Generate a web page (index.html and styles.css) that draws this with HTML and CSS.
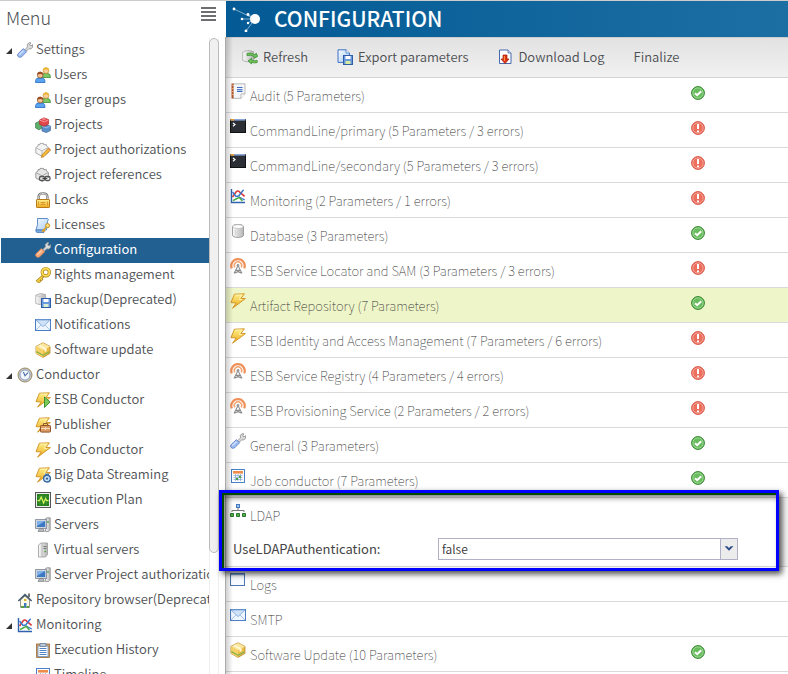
FILE: index.html
```html
<!DOCTYPE html>
<html lang="en">
<head>
	<meta charset="utf-8">
	<title>Configuration</title>
	<link rel="stylesheet" href="styles.css">
</head>
<body>
	<!-- icon sprite -->
	<svg class="sprite" aria-hidden="true">
		<defs>
			<linearGradient id="gold" x1="0" y1="0" x2="0" y2="1"><stop offset="0" stop-color="#fdf08a"/><stop offset="1" stop-color="#f0a81c"/></linearGradient>
			<linearGradient id="steel" x1="0" y1="0" x2="1" y2="0"><stop offset="0" stop-color="#fbfbfb"/><stop offset="1" stop-color="#b5b5b5"/></linearGradient>
			<linearGradient id="sky" x1="0" y1="0" x2="1" y2="1"><stop offset="0" stop-color="#f6faff"/><stop offset="1" stop-color="#a9cdf2"/></linearGradient>
		</defs>
		<symbol id="wrench" viewBox="0 0 16 16">
			<path d="M8 7.5 10.6 4.8 10.2 2.4 12.4.6 13.8.8 12.6 3 14 4 15.6 2.6 15.6 5.2 13.8 7 11.6 6.8 9.5 9z" fill="#dcdcdc" stroke="#8a8a8a" stroke-width=".8"/>
			<path d="M.8 12 6.4 6.6 9.6 9.8 4.4 15 Q2.4 15.8 1.2 14.6 .2 13.4 .8 12z" fill="#9dbcf0" stroke="#5577c4" stroke-width=".8"/>
			<path d="M2.2 12.6 6.6 8.6" stroke="#d7e5ff" stroke-width="1.2"/>
		</symbol>
		<symbol id="wrench-orange" viewBox="0 0 16 16">
			<path d="M8 7.5 10.6 4.8 10.2 2.4 12.4.6 13.8.8 12.6 3 14 4 15.6 2.6 15.6 5.2 13.8 7 11.6 6.8 9.5 9z" fill="#dcdcdc" stroke="#999" stroke-width=".8"/>
			<path d="M.8 12 6.4 6.6 9.6 9.8 4.4 15 Q2.4 15.8 1.2 14.6 .2 13.4 .8 12z" fill="#f6a878" stroke="#e08a58" stroke-width=".8"/>
			<path d="M2.2 12.6 6.6 8.6" stroke="#fdd3b6" stroke-width="1.2"/>
		</symbol>
		<symbol id="users" viewBox="0 0 16 16">
			<path d="M6.5 10.5Q6.5 6.6 9 6.5H13Q15.5 6.8 15.5 10.5z" fill="#7cc665" stroke="#3f8f35" stroke-width=".8"/>
			<circle cx="11" cy="3.6" r="2.9" fill="#f8cf98" stroke="#c68a2e" stroke-width=".7"/>
			<path d="M8 3.2Q8.4.4 11 .4T14 3.2Q11 1.8 8 3.2z" fill="#edb62e"/>
			<path d="M.5 15.5Q.5 11.2 3 11H7.4Q10 11.2 10 15.5z" fill="#58a4f0" stroke="#2468bd" stroke-width=".8"/>
			<circle cx="5.2" cy="8" r="2.9" fill="#f2c294" stroke="#8f4a20" stroke-width=".7"/>
			<path d="M2.2 7.8Q2.4 4.8 5.2 4.8T8.2 7.8Q5.4 6 2.2 7.8z" fill="#9c4a20"/>
		</symbol>
		<symbol id="cubes" viewBox="0 0 16 16">
			<path d="M.6 6 4 4.4 7 6V11L4 12.8.6 11z" fill="#5fae6b" stroke="#39784a" stroke-width=".7"/>
			<path d="M7 9.4 11 7.6 15.4 9V13.6L11.4 15.6 7 14z" fill="#5b8fca" stroke="#38649b" stroke-width=".7"/>
			<path d="M7 9.4 11.3 10.8 15.4 9" stroke="#a3c6ee" fill="none" stroke-width=".8"/>
			<path d="M4.6 3 9 .8 13.6 2.6V7L9.4 9.2 4.6 7.4z" fill="#e2474c" stroke="#b42b35" stroke-width=".7"/>
			<path d="M4.9 3.2 9.3 4.8 13.4 2.8" stroke="#fb9a99" fill="none"/>
			<ellipse cx="9" cy="2" rx="2" ry="1" fill="#f78484"/>
		</symbol>
		<symbol id="cube-pencil" viewBox="0 0 16 16">
			<path d="M.8 5.6 3 4V2.6H5V1.4H8.6V2.6H11.4V4L13.4 5.4V10.6L7.2 14.4.8 11z" fill="#f3f3f3" stroke="#999" stroke-width=".8"/>
			<path d="M1 5.8 7 8.8 13.2 5.6M7 8.8V14" stroke="#bbb" fill="none"/>
			<path d="M13.6 6 15.6 8 9 14.6 6.4 15.4 7.2 12.6z" fill="#f6bb3a" stroke="#b9781a" stroke-width=".8"/>
			<path d="M12.8 6.8 14.8 8.8 15.6 8 13.6 6z" fill="#e88463"/>
		</symbol>
		<symbol id="cube-link" viewBox="0 0 16 16">
			<path d="M.8 5.6 3 4V2.6H5V1.4H8.6V2.6H11.4V4L13.4 5.4V10.6L7.2 14.4.8 11z" fill="#e6e6e6" stroke="#888" stroke-width=".8"/>
			<path d="M1 5.8 7 8.8 13.2 5.6" stroke="#aaa" fill="none"/>
			<rect x="4.5" y="9.5" width="5" height="4" rx="1.5" fill="none" stroke="#555" stroke-width="1.3"/>
			<rect x="10" y="9.5" width="5" height="4" rx="1.5" fill="none" stroke="#555" stroke-width="1.3"/>
			<path d="M7.5 11.5H12" stroke="#444"/>
		</symbol>
		<symbol id="lock" viewBox="0 0 16 16">
			<path d="M3.6 8V4.6Q3.8 1.4 8 1.4T12.4 4.6V8" fill="none" stroke="#777" stroke-width="2.4"/>
			<path d="M3.6 8V4.6Q3.8 1.4 8 1.4T12.4 4.6V8" fill="none" stroke="#ddd" stroke-width=".9"/>
			<rect x="1.5" y="7.5" width="13" height="8" rx=".6" fill="url(#gold)" stroke="#b77a17"/>
			<path d="M3.5 9.5V13.5M5.5 10.5H10.5M5.5 12.5H10.5M12.5 9.5V13.5M8 10V13" stroke="#d99a30"/>
		</symbol>
		<symbol id="licence" viewBox="0 0 16 16">
			<path d="M2.5 1.5H12.5Q14 2 12.5 4.5L11.5 13H1Q3.4 8 2.5 1.5z" fill="url(#sky)" stroke="#5c8dc6"/>
			<path d="M.8 13H9V15.4H2Q.6 15 .8 13z" fill="#7fb2e8" stroke="#3d72b4" stroke-width=".8"/>
			<circle cx="12.6" cy="8.6" r="2" fill="#ffe27a" stroke="#c38a1b"/>
			<path d="M11.4 10 7 14.6M8.6 13 10 14.6" stroke="#dca02a" stroke-width="1.6"/>
		</symbol>
		<symbol id="key" viewBox="0 0 16 16">
			<path d="M8.6 8.6 1.6 14.8M3.4 13.2 5.2 15.4M5.6 11.4 7.4 13.4" stroke="#a97c12" stroke-width="2.8"/>
			<path d="M8.6 8.6 1.6 14.8M3.4 13.2 5 15M5.6 11.4 7 13" stroke="#f8d648" stroke-width="1.3"/>
			<circle cx="10.8" cy="5.2" r="3.6" fill="none" stroke="#a97c12" stroke-width="3.200"/>
			<circle cx="10.8" cy="5.2" r="3.6" fill="none" stroke="#fbdc56" stroke-width="2"/>
		</symbol>
		<symbol id="backup" viewBox="0 0 16 16">
			<path d="M.7 3.2Q5 .2 10.6 2.6V11.6Q5 14 .7 11.4z" fill="url(#steel)" stroke="#aaa" stroke-width=".8"/>
			<path d="M.8 3.6Q5.4 6 10.6 3.2" stroke="#bbb" fill="none" stroke-width=".8"/>
			<rect x="6.5" y="6.5" width="9" height="9" fill="#6a98dc" stroke="#2f5da8"/>
			<path d="M8.5 7H13.5V10H8.5z" fill="#fff"/><path d="M8.5 12H13.5V15H8.5z" fill="#d7efd0"/>
		</symbol>
		<symbol id="mail" viewBox="0 0 16 16">
			<rect x=".5" y="2.5" width="15" height="11" fill="#eef5fe" stroke="#4c7fc4"/>
			<path d="M1 3 8 9.6 15 3z" fill="#cfe2f8" stroke="#82a9dc" stroke-width=".9"/>
			<path d="M1 13 6 8M15 13 10 8" stroke="#9dbde6" stroke-width=".9"/>
		</symbol>
		<symbol id="box" viewBox="0 0 16 16">
			<path d="M8 .8 15 4.4V11.4L8 15.4 1 11.4V4.4z" fill="#edbd48" stroke="#b9862a" stroke-width=".8"/>
			<path d="M8 1 15 4.6 8 8.6 1 4.6z" fill="#fbe69d"/>
			<path d="M8 8.6V15.2L1 11.4V4.6z" fill="#f8d268"/>
			<path d="M5 2.8 11.6 6.6V9L9.6 10.2V7.6L3.6 4z" fill="#fff6d4"/>
			<path d="M1.4 9.6 8 13.2 14.6 9.6" fill="none" stroke="#8ab44a" stroke-width="1.3"/>
		</symbol>
		<symbol id="clock" viewBox="0 0 16 16">
			<circle cx="8" cy="8" r="7" fill="#c3c6cc" stroke="#98804f" stroke-width=".9"/>
			<circle cx="8" cy="8" r="5" fill="#f3f8ff" stroke="#8398b6" stroke-width=".9"/>
			<path d="M6.400 5 8 8.8 11 5.6" fill="none" stroke="#4a6da8" stroke-width="1.1"/>
		</symbol>
		<symbol id="bolt" viewBox="0 0 16 16">
			<path d="M4.400 1.2 14.4.8 11 5.4 15.4 5.6 2.6 15.2 6.2 10 1 9.600z" fill="url(#gold)" stroke="#cf9020" stroke-width=".9"/>
			<path d="M5.200 2.2 12 2 9 6.200 12 6.6" fill="none" stroke="#fff8bd" stroke-width=".8"/>
		</symbol>
		<symbol id="bolt-play" viewBox="0 0 16 16">
			<use href="#bolt"/><path d="M9.5 5 15 10 9.5 15.4z" fill="#7cca58" stroke="#3d9130"/>
		</symbol>
		<symbol id="bolt-case" viewBox="0 0 16 16">
			<use href="#bolt"/>
			<path d="M8.5 8.5V6.5H12.5V8.5" fill="none" stroke="#8a5a30"/>
			<rect x="5.5" y="8.5" width="10" height="6.6" rx=".8" fill="#dc9a64" stroke="#8e5327"/>
			<path d="M6 11.5H15M10.5 10V13" stroke="#f6dcb8"/>
		</symbol>
		<symbol id="bolt-gear" viewBox="0 0 16 16">
			<use href="#bolt"/>
			<path d="M10 6.5H14V8H10z" fill="#5d88b9"/>
			<circle cx="12" cy="11.6" r="3.4" fill="#cfe3f7" stroke="#36679f" stroke-width="1.4"/>
			<circle cx="12" cy="11.6" r="1.2" fill="#36679f"/>
		</symbol>
		<symbol id="plan" viewBox="0 0 16 16">
			<rect x=".5" y=".5" width="15" height="15" fill="#eee" stroke="#555"/>
			<rect x="2" y="2" width="12" height="12" fill="#257c1c"/>
			<path d="M5 2V14M8 2V14M11 2V14M2 5H14M2 8H14M2 11H14" stroke="#4ba33c" stroke-width=".6"/>
			<path d="M2.5 8.6H4.5L6.2 5 8.6 11 10.6 6.5 11.6 8.6H13.6" fill="none" stroke="#d8f55f" stroke-width="1.2"/>
		</symbol>
		<symbol id="pc" viewBox="0 0 16 16">
			<path d="M10.5 1.5 12 .8H15.2V13L13.6 14.6H10.5z" fill="url(#steel)" stroke="#888" stroke-width=".8"/>
			<path d="M13 4V6" stroke="#4a9a36" stroke-width="1.2"/>
			<rect x=".6" y="2.6" width="11" height="8.8" fill="#d5dae0" stroke="#818b98" stroke-width=".9"/>
			<rect x="2" y="4" width="8.2" height="6" fill="#3c78c3"/>
			<path d="M2 4H10L2 9z" fill="#7fb0e8"/>
			<path d="M4.6 11.6H8L9.4 14.4H3z" fill="#b7bcc2" stroke="#777" stroke-width=".7"/>
		</symbol>
		<symbol id="server" viewBox="0 0 16 16">
			<path d="M3.5 3 6 1H12.5V12.6L10.4 15H3.5z" fill="url(#steel)" stroke="#999" stroke-width=".8"/>
			<path d="M7 1.4V14.6" stroke="#aaa" stroke-width=".7"/>
			<path d="M8.5 4.5H11.5M8.5 6.5H11.5" stroke="#777"/><path d="M9.4 9.5H11" stroke="#56a63c" stroke-width="1.6"/>
		</symbol>
		<symbol id="home" viewBox="0 0 16 16">
			<path d="M3.5 8V15.5H12.5V8L8 4z" fill="#fffbe6" stroke="#999"/>
			<path d="M1.4 9 8 2.6 14.6 9" fill="none" stroke="#445b6b" stroke-width="1.6"/>
			<path d="M12 1.4V5" stroke="#666" stroke-width="1.8"/>
			<path d="M7 11H9.4V15.5H7z" fill="#3f7dba"/><path d="M7 7H9.4V9H7z" fill="#d3b52d"/>
			<path d="M4 15H7M9.6 15H12" stroke="#58a03c" stroke-width="1.8"/>
		</symbol>
		<symbol id="chart" viewBox="0 0 16 16">
			<path d="M1.5 1V14.5H15" fill="none" stroke="#2f62ad" stroke-width="1.4"/>
			<path d="M2.6 9 6 4Q8 1.8 10 4.4L14.6 8.4" fill="none" stroke="#d93838" stroke-width="1.6"/>
			<path d="M2.6 4 6 8.4 8.6 8 13.6 1.8M9 9 14.8 12" fill="none" stroke="#3577d1" stroke-width="1.4"/>
			<path d="M3 12.6 6 11 9.4 9.4 12.4 13" fill="none" stroke="#4fae48" stroke-width="1.6"/>
		</symbol>
		<symbol id="clipboard" viewBox="0 0 16 16">
			<rect x="1.6" y="2" width="12.8" height="13.4" fill="#d79f62" stroke="#996833" stroke-width=".8"/>
			<rect x="3" y="4" width="10" height="10.6" fill="#fff" stroke="#6992c6" stroke-width=".8"/>
			<path d="M4.5 6.5H11.5M4.5 8.5H11.5M4.5 10.5H11.5M4.5 12.5H11.5" stroke="#4f83c8"/>
			<path d="M5 1.5H11V4.5H5z" fill="#b8c8dd" stroke="#6b7e97" stroke-width=".8"/>
		</symbol>
		<symbol id="calendar" viewBox="0 0 16 16">
			<rect x="1.5" y="1.5" width="13" height="13" fill="#fff" stroke="#4a80c4"/>
			<path d="M3 3H13V5.6H3z" fill="#f08c4a"/>
			<path d="M3.5 7.5H12.5M3.5 9.5H12.5M3.5 11.5H12.5M5.5 6V13M8 6V13M10.5 6V13" stroke="#8aabd0" stroke-width=".8"/>
			<path d="M9 8H11V10H9zM6 10H8V12H6z" fill="#4fa34a"/>
		</symbol>
		<symbol id="refresh" viewBox="0 0 16 16">
			<path d="M.7 3.2Q5 .2 11.6 2.6V11.6Q5 14 .7 11.4z" fill="url(#steel)" stroke="#aaa" stroke-width=".8"/>
			<path d="M5 4.400Q10 3.200 12 5.400H14V4L15.8 7.400 12 9.400V7.400Q9 5.800 5 6.600z" fill="#6fc257" stroke="#34862c" stroke-width=".7"/>
			<path d="M15.200 13.600Q12 14.600 9.6 13V15L6 12 9.6 9.2V10.800Q12 12.2 15.200 11.400z" fill="#6fc257" stroke="#34862c" stroke-width=".7"/>
		</symbol>
		<symbol id="export" viewBox="0 0 16 16">
			<path d="M1 .8H9L12.4 4V13.4H1z" fill="url(#sky)" stroke="#3f73c4"/>
			<path d="M9 .8V4H12.4" fill="#fff" stroke="#3f73c4" stroke-width=".8"/>
			<rect x="6.5" y="6.5" width="9" height="9" fill="#6a98dc" stroke="#2f5da8"/>
			<path d="M8.5 7H13.5V10H8.5z" fill="#fff"/><path d="M8.5 12H13.5V15H8.5z" fill="#d8ec9d"/>
		</symbol>
		<symbol id="download" viewBox="0 0 16 16">
			<path d="M2.5 1H11L14 4V14.5H2.5z" fill="#fff" stroke="#4b67ae"/>
			<path d="M11 1V4H14" fill="#dce4f6" stroke="#4b67ae" stroke-width=".8"/>
			<path d="M6 6H10V10H12L8 14.6 4 10H6z" fill="#dd3312" stroke="#a11a0a" stroke-width=".7"/>
			<path d="M7.4 7V12" stroke="#ffa04a"/>
		</symbol>
		<symbol id="notebook" viewBox="0 0 16 16">
			<path d="M3 .8H15V11L11 15.4H3z" fill="#f4f5f8" stroke="#aaa" stroke-width=".8"/>
			<path d="M15 11H11V15.4" fill="#fff" stroke="#aaa" stroke-width=".8"/>
			<path d="M2.500 .5V15.5" stroke="#b3562b" stroke-width="2"/>
			<path d="M1.500 2.5H4M1.500 5.5H4M1.500 8.5H4M1.500 11.5H4" stroke="#eab58f" stroke-width=".8"/>
			<path d="M7 4.5H12.5M7 8.5H12.5" stroke="#3e6dc0"/><path d="M7 6H12.5V7.4H7z" fill="#5482d0"/>
		</symbol>
		<symbol id="terminal" viewBox="0 0 16 16">
			<rect x=".5" y="1.5" width="15" height="13" fill="#2b2f35" stroke="#111"/>
			<path d="M.5 1.8H15.5" stroke="#8aa7d8" stroke-width="1.6"/><path d="M.5 1.8H4" stroke="#f0a42f" stroke-width="1.6"/>
			<path d="M3 5 5 6.600 3 8.2" fill="none" stroke="#fff" stroke-width="1.2"/>
		</symbol>
		<symbol id="db" viewBox="0 0 16 16">
			<path d="M2.5 3.4Q2.6 1.4 8 1.4T13.5 3.4V12.2Q13.2 14.4 8 14.4T2.5 12.2z" fill="url(#steel)" stroke="#999" stroke-width=".9"/>
			<ellipse cx="8" cy="3.6" rx="5" ry="1.9" fill="#fff" stroke="#bbb" stroke-width=".7"/>
			<path d="M5.5 7V12M8 7.4V12.4M10.5 7V12" stroke="#ccc" stroke-width=".7"/>
		</symbol>
		<symbol id="antenna" viewBox="0 0 16 16">
			<path d="M1.800 10.400A6.700 6.700 0 1 1 14.200 10.400" fill="none" stroke="#f09058" stroke-width="2.2"/>
			<path d="M4.8 9.4A3.700 3.700 0 1 1 11.2 9.4" fill="none" stroke="#f5a36f" stroke-width="1.5"/>
			<path d="M4 15.4 8 7.6 12 15.4M5.6 12.4H10.4M6 12.4 11 15M10.4 12.4 5 15" fill="none" stroke="#8b8b8b" stroke-width="1.1"/>
			<circle cx="8" cy="7.4" r="1.4" fill="#999"/>
		</symbol>
		<symbol id="ldap" viewBox="0 0 16 16">
			<path d="M8 5V8M2 9V7.5H14V9" fill="none" stroke="#777"/>
			<rect x="6.5" y="1.5" width="3" height="3" fill="#9ec1f2" stroke="#4477bd"/>
			<path d="M.5 10.5H3.5V13.5H.5zM6.5 10.5H9.5V13.5H6.5zM12.5 10.5H15.5V13.5H12.5z" fill="#59b150" stroke="#26752a"/>
		</symbol>
		<symbol id="window" viewBox="0 0 16 16">
			<rect x=".5" y="1.5" width="14" height="12" fill="#f8fbff" stroke="#4b77b4"/><path d="M1 2.5H14" stroke="#7fa5dc" stroke-width="1.4"/>
		</symbol>
		<symbol id="ok" viewBox="0 0 14 14">
			<circle cx="7" cy="7" r="6.4" fill="#4fae45" stroke="#34862e"/><circle cx="7" cy="7" r="5.2" fill="#67bc5b" stroke="#c4e6bd" stroke-width=".7"/>
			<path d="M4 7.2 6.2 9.2 10.2 5.2" fill="none" stroke="#fff" stroke-width="2"/>
		</symbol>
		<symbol id="error" viewBox="0 0 14 14">
			<circle cx="7" cy="7" r="6.4" fill="#e65a48" stroke="#d85a4c"/><circle cx="7" cy="7" r="5.2" fill="#ec6e5c" stroke="#f9c6bd" stroke-width=".7"/>
			<path d="M7 3V8M7 9.4V11.2" stroke="#fff" stroke-width="2"/>
		</symbol>
	</svg>

	<div class="page">
		<aside class="sidebar">
			<header class="menu-head">
				<h2>Menu</h2>
				<button class="burger" type="button" aria-label="Toggle menu"><i></i><i></i><i></i><i></i></button>
			</header>
			<div class="menu-body">
				<nav class="tree">
					<a class="node" href="#"><i class="arrow"></i><svg><use href="#wrench"/></svg>Settings</a>
					<a class="leaf" href="#"><svg><use href="#users"/></svg>Users</a>
					<a class="leaf" href="#"><svg><use href="#users"/></svg>User groups</a>
					<a class="leaf" href="#"><svg><use href="#cubes"/></svg>Projects</a>
					<a class="leaf" href="#"><svg><use href="#cube-pencil"/></svg>Project authorizations</a>
					<a class="leaf" href="#"><svg><use href="#cube-link"/></svg>Project references</a>
					<a class="leaf" href="#"><svg><use href="#lock"/></svg>Locks</a>
					<a class="leaf" href="#"><svg><use href="#licence"/></svg>Licenses</a>
					<a class="leaf selected" href="#"><svg><use href="#wrench-orange"/></svg>Configuration</a>
					<a class="leaf" href="#"><svg><use href="#key"/></svg>Rights management</a>
					<a class="leaf" href="#"><svg><use href="#backup"/></svg>Backup(Deprecated)</a>
					<a class="leaf" href="#"><svg><use href="#mail"/></svg>Notifications</a>
					<a class="leaf" href="#"><svg><use href="#box"/></svg>Software update</a>
					<a class="node" href="#"><i class="arrow"></i><svg><use href="#clock"/></svg>Conductor</a>
					<a class="leaf" href="#"><svg><use href="#bolt-play"/></svg>ESB Conductor</a>
					<a class="leaf" href="#"><svg><use href="#bolt-case"/></svg>Publisher</a>
					<a class="leaf" href="#"><svg><use href="#bolt"/></svg>Job Conductor</a>
					<a class="leaf" href="#"><svg><use href="#bolt-gear"/></svg>Big Data Streaming</a>
					<a class="leaf" href="#"><svg><use href="#plan"/></svg>Execution Plan</a>
					<a class="leaf" href="#"><svg><use href="#pc"/></svg>Servers</a>
					<a class="leaf" href="#"><svg><use href="#server"/></svg>Virtual servers</a>
					<a class="leaf" href="#"><svg><use href="#pc"/></svg>Server Project authorizations</a>
					<a class="node childless" href="#"><svg><use href="#home"/></svg>Repository browser(Deprecated)</a>
					<a class="node" href="#"><i class="arrow"></i><svg><use href="#chart"/></svg>Monitoring</a>
					<a class="leaf" href="#"><svg><use href="#clipboard"/></svg>Execution History</a>
					<a class="leaf" href="#"><svg><use href="#calendar"/></svg>Timeline</a>
				</nav>
				<div class="scrollbar"><div class="thumb"></div></div>
			</div>
		</aside>

		<main class="content">
			<header class="title-bar">
				<svg class="logo" viewBox="0 0 30 26">
					<path d="M2 3 23 13M10 13H23M14 25 23 13M16 8.5 23 13M16 17 23 13" stroke="#9fc3dc" stroke-width=".8"/>
					<circle cx="23" cy="13" r="5" fill="#fff"/>
					<g fill="#fff"><circle cx="2" cy="3" r="1.4"/><circle cx="10" cy="13" r="1.3"/><circle cx="14" cy="25" r="1.4"/><circle cx="16" cy="8.5" r="1.4"/><circle cx="16" cy="17" r="1.2"/></g>
				</svg>
				<h1>CONFIGURATION</h1>
			</header>
			<div class="panel">
				<div class="toolbar">
					<button type="button"><svg><use href="#refresh"/></svg>Refresh</button>
					<button type="button"><svg><use href="#export"/></svg>Export parameters</button>
					<button type="button"><svg><use href="#download"/></svg>Download Log</button>
					<button type="button">Finalize</button>
				</div>
				<table class="groups">
					<tbody>
						<tr><td class="name"><svg><use href="#notebook"/></svg><span>Audit (5 Parameters)</span></td><td><svg class="status"><use href="#ok"/></svg></td></tr>
						<tr><td class="name"><svg><use href="#terminal"/></svg><span>CommandLine/primary (5 Parameters / 3 errors)</span></td><td><svg class="status"><use href="#error"/></svg></td></tr>
						<tr><td class="name"><svg><use href="#terminal"/></svg><span>CommandLine/secondary (5 Parameters / 3 errors)</span></td><td><svg class="status"><use href="#error"/></svg></td></tr>
						<tr><td class="name"><svg><use href="#chart"/></svg><span>Monitoring (2 Parameters / 1 errors)</span></td><td><svg class="status"><use href="#error"/></svg></td></tr>
						<tr><td class="name"><svg><use href="#db"/></svg><span>Database (3 Parameters)</span></td><td><svg class="status"><use href="#ok"/></svg></td></tr>
						<tr><td class="name"><svg><use href="#antenna"/></svg><span>ESB Service Locator and SAM (3 Parameters / 3 errors)</span></td><td><svg class="status"><use href="#error"/></svg></td></tr>
						<tr class="hover"><td class="name"><svg><use href="#bolt"/></svg><span>Artifact Repository (7 Parameters)</span></td><td><svg class="status"><use href="#ok"/></svg></td></tr>
						<tr><td class="name"><svg><use href="#bolt"/></svg><span>ESB Identity and Access Management (7 Parameters / 6 errors)</span></td><td><svg class="status"><use href="#error"/></svg></td></tr>
						<tr><td class="name"><svg><use href="#antenna"/></svg><span>ESB Service Registry (4 Parameters / 4 errors)</span></td><td><svg class="status"><use href="#error"/></svg></td></tr>
						<tr><td class="name"><svg><use href="#antenna"/></svg><span>ESB Provisioning Service (2 Parameters / 2 errors)</span></td><td><svg class="status"><use href="#error"/></svg></td></tr>
						<tr><td class="name"><svg><use href="#wrench"/></svg><span>General (3 Parameters)</span></td><td><svg class="status"><use href="#ok"/></svg></td></tr>
						<tr><td class="name"><svg><use href="#calendar"/></svg><span>Job conductor (7 Parameters)</span></td><td><svg class="status"><use href="#ok"/></svg></td></tr>
						<tr>
							<td class="open" colspan="2">
								<div class="name"><svg><use href="#ldap"/></svg><span>LDAP</span></div>
								<div class="field">
									<label for="use-ldap">UseLDAPAuthentication:</label>
									<div class="select">
										<select id="use-ldap"><option>false</option><option>true</option></select>
										<svg viewBox="0 0 18 20"><path d="M4 7H7L9 9 11 7H14L9 12z"/></svg>
									</div>
								</div>
								<div class="callout"></div>
							</td>
						</tr>
						<tr><td class="name"><svg><use href="#window"/></svg><span>Logs</span></td><td></td></tr>
						<tr><td class="name"><svg><use href="#mail"/></svg><span>SMTP</span></td><td></td></tr>
						<tr><td class="name"><svg><use href="#box"/></svg><span>Software Update (10 Parameters)</span></td><td><svg class="status"><use href="#ok"/></svg></td></tr>
					</tbody>
				</table>
			</div>
		</main>
	</div>
</body>
</html>
```

FILE: styles.css
```css
* {
	box-sizing: border-box;
}

body {
	margin: 0;
	background: #fff;
	color: #4d4f53;
	font: 350 13px/20px "Noto Sans CJK SC", "Noto Sans", sans-serif;
}

h1, h2 {
	margin: 0;
	font-weight: 400;
}

a {
	color: inherit;
	text-decoration: none;
}

svg {
	flex: none;
	width: 16px;
	height: 16px;
}

.sprite {
	position: absolute;
	width: 0;
	height: 0;
}

.page {
	display: flex;
	height: 100vh;
	border-top: 1px solid #ccc;
	overflow: hidden;
}

/* left menu */
.sidebar {
	display: flex;
	flex-direction: column;
	flex: 0 0 219px;
	min-width: 0;
	margin-right: 7px;
}

.menu-head {
	display: flex;
	justify-content: space-between;
	align-items: flex-start;
	height: 37px;
	padding: 5px 3px 0 6px;
}

.menu-head h2 {
	font-size: 18px;
	font-weight: 300;
	line-height: 23px;
}

.burger {
	display: flex;
	flex-direction: column;
	gap: 2px;
	padding: 1px 0;
	border: 0;
	background: none;
}

.burger i {
	width: 15px;
	height: 2px;
	background: #6e6e70;
}

.menu-body {
	display: flex;
	flex: 1;
	min-height: 0;
}

.tree {
	flex: 1;
	min-width: 0;
	overflow: hidden;
	padding-left: 1px;
}

.node,
.leaf {
	display: flex;
	gap: 3px;
	height: 25px;
	line-height: 22px;
	white-space: nowrap;
}

.node svg,
.leaf svg {
	margin-top: 4px;
}

.node {
	padding-left: 5px;
}

.childless {
	padding-left: 16px;
}

.leaf {
	padding-left: 34px;
}

.selected {
	background: #226092;
	color: #fff;
	font-weight: 400;
}

.arrow {
	width: 6px;
	height: 6px;
	margin: 10px 2px 0 0;
	background: #333;
	clip-path: polygon(100% 0, 100% 100%, 0 100%);
}

.scrollbar {
	width: 10px;
	border: solid #eee;
	border-width: 0 1px;
}

.thumb {
	height: 81%;
	margin: 0 -1px;
	border: 1px solid #bbb;
	border-radius: 5px;
	background: #f0f0f0;
}

/* right part */
.content {
	display: flex;
	flex-direction: column;
	flex: 1;
	min-width: 0;
}

.title-bar {
	display: flex;
	flex: none;
	align-items: center;
	gap: 12px;
	height: 36px;
	padding-left: 6px;
	background: linear-gradient(90deg, #035a95, #1c6fa3);
	color: #fff;
}

.title-bar h1 {
	padding-bottom: 2px;
	font-size: 21px;
	font-weight: 500;
	line-height: 30px;
}

.logo {
	width: 30px;
	height: 26px;
}

.panel {
	position: relative;
	flex: 1;
	min-height: 0;
	border-left: 1px solid #aaa;
	margin-left: -1px;
}

/* shade along the left edge */
.panel::before {
	content: "";
	position: absolute;
	z-index: 1;
	top: 0;
	bottom: 0;
	left: 0;
	width: 7px;
	background: linear-gradient(90deg, rgba(0, 0, 0, .18), rgba(0, 0, 0, 0));
	pointer-events: none;
}

.toolbar {
	display: flex;
	align-items: center;
	gap: 29px;
	height: 41px;
	padding: 0 0 2px 16px;
	border-top: 1px solid #ccc;
	border-bottom: 1px solid #d4d4d4;
	background: linear-gradient(#e2e2e2, #f1f1f1);
}

.toolbar button {
	display: flex;
	align-items: center;
	gap: 5px;
	padding: 0;
	border: 0;
	background: none;
	color: inherit;
	font: inherit;
}

.groups {
	width: 100%;
	border-spacing: 0;
	table-layout: fixed;
}

.groups td {
	height: 35px;
	padding: 0;
	border-bottom: 1px solid #d9d9d9;
	vertical-align: top;
}

.groups td.name {
	width: 82%;
}

.name svg {
	float: left;
	margin: 5px 4px 0;
}

.name span {
	display: block;
	padding-top: 8px;
	color: #333;
	font-weight: 100;
}

.groups .status {
	display: block;
	width: 14px;
	height: 14px;
	margin: 8px 4px 0;
}

.hover {
	background: #eef5c8;
}

.groups td.open {
	position: relative;
	height: 69px;
	padding-right: 9px;
	background: #f4f4f4;
}

.open > div {
	background: #fff;
}

.open .name {
	height: 34px;
}

.field {
	display: flex;
	align-items: center;
	height: 34px;
	padding-left: 7px;
}

.field label {
	flex: 0 0 205px;
	color: #444;
	font-weight: 400;
}

.select {
	position: relative;
	width: 300px;
}

.select select {
	display: block;
	width: 100%;
	height: 22px;
	padding: 0 3px;
	border: 1px solid #b0b0c6;
	border-radius: 0;
	background: #fff;
	color: #333;
	font: inherit;
	font-size: 12px;
	appearance: none;
}

.select svg {
	position: absolute;
	top: 1px;
	right: 1px;
	width: 17px;
	height: 20px;
	border-left: 1px solid #b0b0c6;
	background: #ececec;
	fill: #2c4a85;
	pointer-events: none;
}

/* frame drawn over the open group */
.open .callout {
	position: absolute;
	z-index: 2;
	top: -8px;
	right: 9px;
	bottom: -5px;
	left: -7px;
	border: 3px solid #00f;
	background: none;
	box-shadow: 3px 3px 6px rgba(0, 0, 0, .7), inset 2px 2px 0 #004a00, inset 4px 4px 6px rgba(0, 0, 0, .6);
	pointer-events: none;
}
```
